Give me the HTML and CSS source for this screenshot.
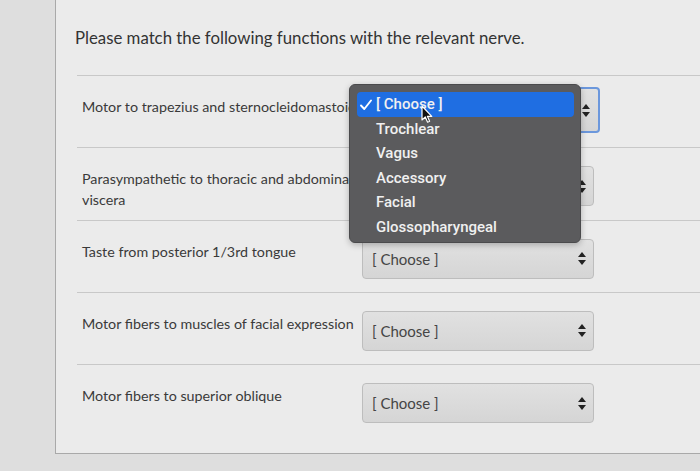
FILE: index.html
```html
<!DOCTYPE html>
<html>
<head>
<meta charset="utf-8">
<link rel="stylesheet" href="styles.css">
</head>
<body>
<div class="page">
  <h1 class="title">Please match the following functions with the relevant nerve.</h1>
  <div class="questions">
    <div class="row row-first">
      <div class="label nowrap">Motor to trapezius and sternocleidomastoid</div>
      <div class="select focus"><span>[ Choose ]</span><svg class="arrows" width="8" height="13" viewBox="0 0 8 13"><polygon points="0,5 4,0 8,5"/><polygon points="0,8 4,13 8,8"/></svg></div>
    </div>
    <div class="row">
      <div class="label">Parasympathetic to thoracic and abdominal viscera</div>
      <div class="select"><span>[ Choose ]</span><svg class="arrows" width="8" height="13" viewBox="0 0 8 13"><polygon points="0,5 4,0 8,5"/><polygon points="0,8 4,13 8,8"/></svg></div>
    </div>
    <div class="row">
      <div class="label">Taste from posterior 1/3rd tongue</div>
      <div class="select"><span>[ Choose ]</span><svg class="arrows" width="8" height="13" viewBox="0 0 8 13"><polygon points="0,5 4,0 8,5"/><polygon points="0,8 4,13 8,8"/></svg></div>
    </div>
    <div class="row">
      <div class="label">Motor fibers to muscles of facial expression</div>
      <div class="select"><span>[ Choose ]</span><svg class="arrows" width="8" height="13" viewBox="0 0 8 13"><polygon points="0,5 4,0 8,5"/><polygon points="0,8 4,13 8,8"/></svg></div>
    </div>
    <div class="row">
      <div class="label">Motor fibers to superior oblique</div>
      <div class="select"><span>[ Choose ]</span><svg class="arrows" width="8" height="13" viewBox="0 0 8 13"><polygon points="0,5 4,0 8,5"/><polygon points="0,8 4,13 8,8"/></svg></div>
    </div>
  </div>
</div>

<div class="menu">
  <div class="item active"><svg class="check" width="12" height="12" viewBox="0 0 12 12"><polyline points="1,6.5 4.3,10 11,1.5" fill="none" stroke="#fff" stroke-width="1.9" stroke-linecap="round" stroke-linejoin="round"/></svg>[ Choose ]</div>
  <div class="item">Trochlear</div>
  <div class="item">Vagus</div>
  <div class="item">Accessory</div>
  <div class="item">Facial</div>
  <div class="item">Glossopharyngeal</div>
</div>

<svg class="cursor" width="12" height="19" viewBox="0 0 12 19"><path d="M1 1 L1 15 L4.3 12 L6.6 17.2 L8.6 16.3 L6.4 11.3 L10.8 11.3 Z" fill="#111" stroke="#fff" stroke-width="1.2" stroke-linejoin="round"/></svg>
</body>
</html>
```

FILE: styles.css
```css
html, body {
  margin: 0;
  padding: 0;
}
body {
  background: #dedede;
  font-family: Lato, "Open Sans", sans-serif;
  color: #3a3a3a;
  width: 700px;
  height: 471px;
  overflow: hidden;
  position: relative;
}
.page {
  margin-left: 55px;
  height: 454px;
  box-sizing: border-box;
  border-left: 1px solid #a9a9a9;
  border-bottom: 1px solid #a9a9a9;
  background: #ebebeb;
  padding: 27px 0 0 19px;
}
.title {
  margin: 0;
  font-size: 16.8px;
  font-weight: 400;
  line-height: 22px;
  color: #333;
}
.questions {
  margin-top: 26px;
  margin-left: 2px;
}
.row {
  display: flex;
  align-items: flex-start;
  box-sizing: border-box;
  height: 72.3px;
  border-top: 1px solid #c8c8c8;
  padding: 18px 0 0 5px;
}
.label {
  width: 280px;
  flex: none;
  font-size: 14.3px;
  line-height: 21px;
  margin-top: 2px;
}
.nowrap {
  white-space: nowrap;
  overflow: hidden;
}
.select {
  width: 232px;
  height: 40px;
  box-sizing: border-box;
  border: 1px solid #bdbdbd;
  border-radius: 4px;
  background: linear-gradient(#e1e1e1, #d5d5d5);
  display: flex;
  align-items: center;
  justify-content: space-between;
  padding: 0 7px 0 9px;
  font-size: 15px;
  color: #454545;
}
.select.focus {
  width: 238px;
  height: 46px;
  margin-top: -7px;
  padding-right: 8px;
  border: 2px solid #6b97dc;
}
.arrows {
  fill: #222;
}
.menu {
  position: absolute;
  left: 349px;
  top: 84px;
  width: 232px;
  height: 159px;
  box-sizing: border-box;
  padding: 7px 6px 2px 7px;
  background: #5b5b5d;
  border: 1px solid #4a4a4c;
  border-radius: 6px;
  box-shadow: 0 2px 6px rgba(0,0,0,0.25);
  font-family: Roboto, "Liberation Sans", sans-serif;
  font-weight: 500;
  font-size: 15px;
  color: #f0f0f0;
}
.item {
  height: 24.6px;
  line-height: 24.6px;
  padding-left: 19px;
  position: relative;
}
.item.active {
  background: #1f6ee2;
  border-radius: 4px;
  height: 25px;
  line-height: 25px;
  margin-bottom: -0.4px;
}
.check {
  position: absolute;
  left: 3px;
  top: 7px;
}
.cursor {
  position: absolute;
  left: 421px;
  top: 105px;
}
```
